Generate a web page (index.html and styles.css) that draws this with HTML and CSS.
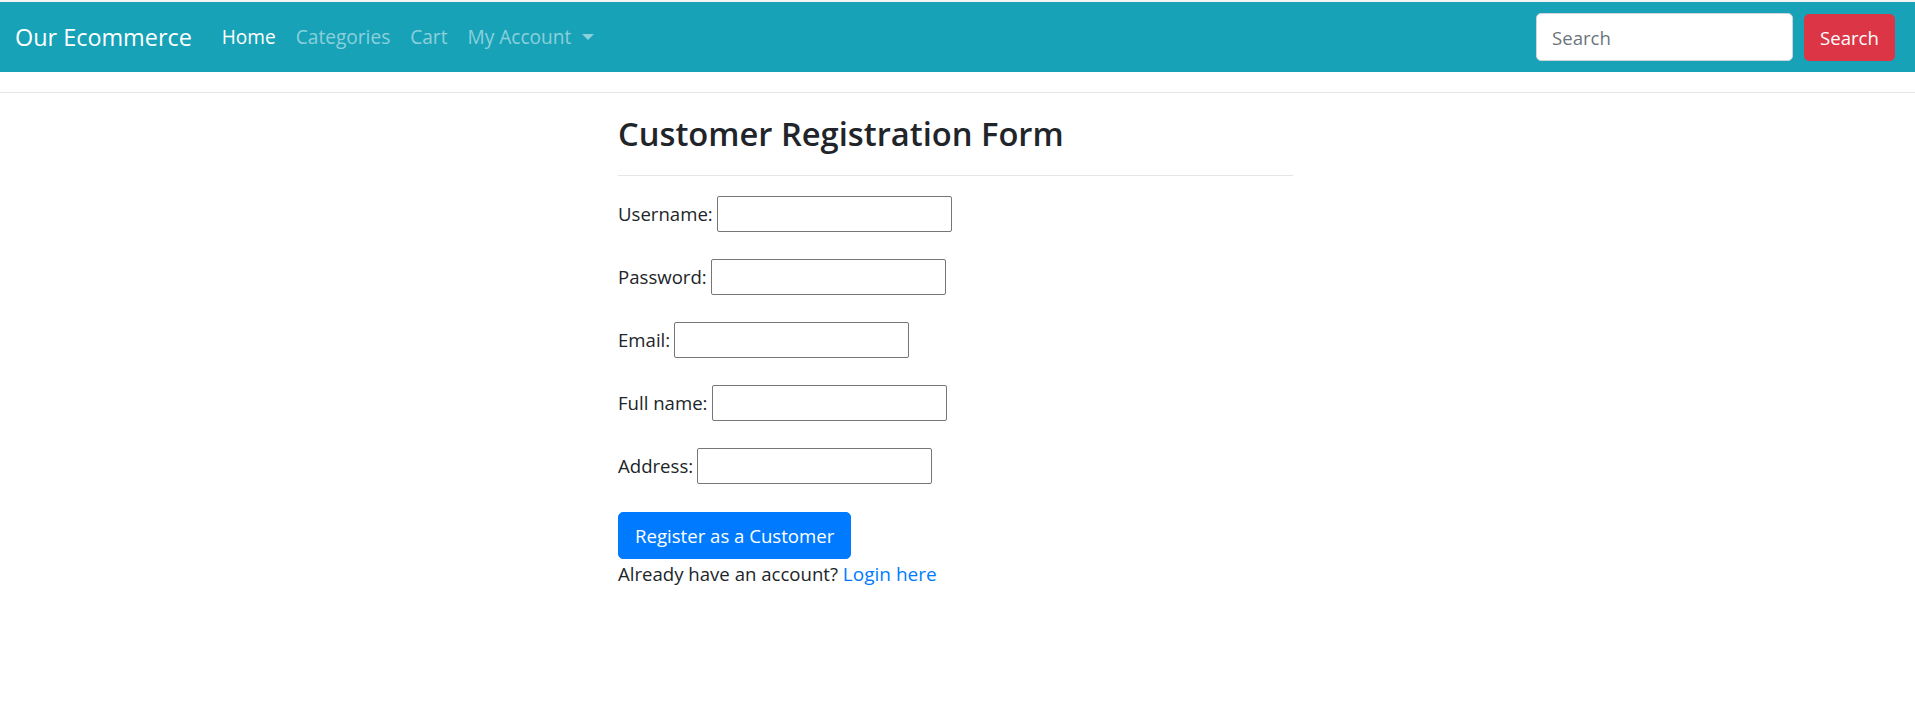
FILE: index.html
```html
<!DOCTYPE html>
<html lang="en">
<head>
<meta charset="utf-8">
<title>Customer Registration</title>
<link rel="stylesheet" href="styles.css">
</head>
<body>
<nav class="navbar">
  <a class="brand" href="#">Our Ecommerce</a>
  <ul class="nav">
    <li><a class="nav-link active" href="#">Home</a></li>
    <li><a class="nav-link" href="#">Categories</a></li>
    <li><a class="nav-link" href="#">Cart</a></li>
    <li><a class="nav-link dropdown" href="#">My Account<span class="caret"></span></a></li>
  </ul>
  <form class="search">
    <input class="search-input" type="search" placeholder="Search">
    <button class="btn btn-danger" type="button">Search</button>
  </form>
</nav>
<hr class="top-rule">
<main class="page">
  <div class="column">
    <h3 class="title">Customer Registration Form</h3>
    <hr class="title-rule">
    <form class="reg-form">
      <p class="row"><label>Username:</label><input class="field" type="text"></p>
      <p class="row"><label>Password:</label><input class="field" type="password"></p>
      <p class="row"><label>Email:</label><input class="field" type="text"></p>
      <p class="row"><label>Full name:</label><input class="field" type="text"></p>
      <p class="row"><label>Address:</label><input class="field" type="text"></p>
      <button class="btn btn-primary" type="button">Register as a Customer</button>
    </form>
    <p class="login-line">Already have an account? <a href="#">Login here</a></p>
  </div>
</main>
</body>
</html>
```
FILE: styles.css
```css
* { box-sizing: border-box; }
html, body { margin: 0; padding: 0; }
body {
  background: #fff;
  color: #212529;
  font-family: "Open Sans", "Noto Sans", sans-serif;
  font-size: 18.6px;
  line-height: 30px;
  border-top: 2px solid #f4f4f4;
}
a { text-decoration: none; }

.navbar {
  display: flex;
  align-items: center;
  height: 70px;
  padding: 0 20px 0 15px;
  background: #17a2b8;
}
.brand {
  color: #fff;
  font-size: 23.4px;
  line-height: 38px;
  margin-right: 20px;
}
.nav {
  display: flex;
  list-style: none;
  margin: 0;
  padding: 0;
}
.nav-link {
  display: flex;
  align-items: center;
  padding: 0 10px;
  color: rgba(255,255,255,.5);
  font-size: 19.1px;
  line-height: 30px;
}
.nav-link.active { color: #fff; }
.caret {
  display: inline-block;
  margin-left: 11px;
  width: 0;
  height: 0;
  border-top: 6px solid rgba(255,255,255,.5);
  border-left: 6px solid transparent;
  border-right: 6px solid transparent;
}
.search {
  display: flex;
  align-items: center;
  margin-left: auto;
}
.search-input {
  width: 257px;
  height: 48px;
  padding: 0 15px;
  border: 1px solid #ced4da;
  border-radius: 5px;
  font-family: inherit;
  font-size: 18.6px;
  color: #495057;
  background: #fff;
  margin-right: 11px;
}
.search-input::placeholder { color: #6c757d; }
.btn {
  height: 47px;
  padding: 0 15px;
  border: 1px solid transparent;
  border-radius: 5px;
  font-family: inherit;
  font-size: 18.6px;
  color: #fff;
  cursor: pointer;
}
.btn-danger { background: #dc3545; border-color: #dc3545; width: 91px; }
.btn-primary { background: #007bff; border-color: #007bff; padding: 0 16px; }

.top-rule {
  margin: 20px 0 0;
  border: 0;
  border-top: 1px solid rgba(0,0,0,.1);
}
.page {
  display: flex;
  justify-content: center;
  padding-right: 4px;
}
.column { width: 675px; }
.title {
  margin: 20px 0 0;
  font-size: 32.7px;
  font-weight: 600;
  line-height: 42px;
  color: #212529;
}
.title-rule {
  margin: 20px 0;
  border: 0;
  border-top: 1px solid rgba(0,0,0,.1);
}
.reg-form { margin: 0; }
.row {
  display: flex;
  align-items: center;
  height: 36px;
  margin: 0 0 27px;
}
.row label { margin-right: 4px; }
.field {
  width: 235px;
  height: 36px;
  border: 1px solid #767676;
  border-radius: 2px;
  padding: 1px 3px;
  font-family: inherit;
  font-size: 18.6px;
  background: #fff;
}
.reg-form .btn-primary { margin-top: 1px; }
.login-line { margin: 0; }
.login-line a { color: #007bff; font-size: 19px; }
```
